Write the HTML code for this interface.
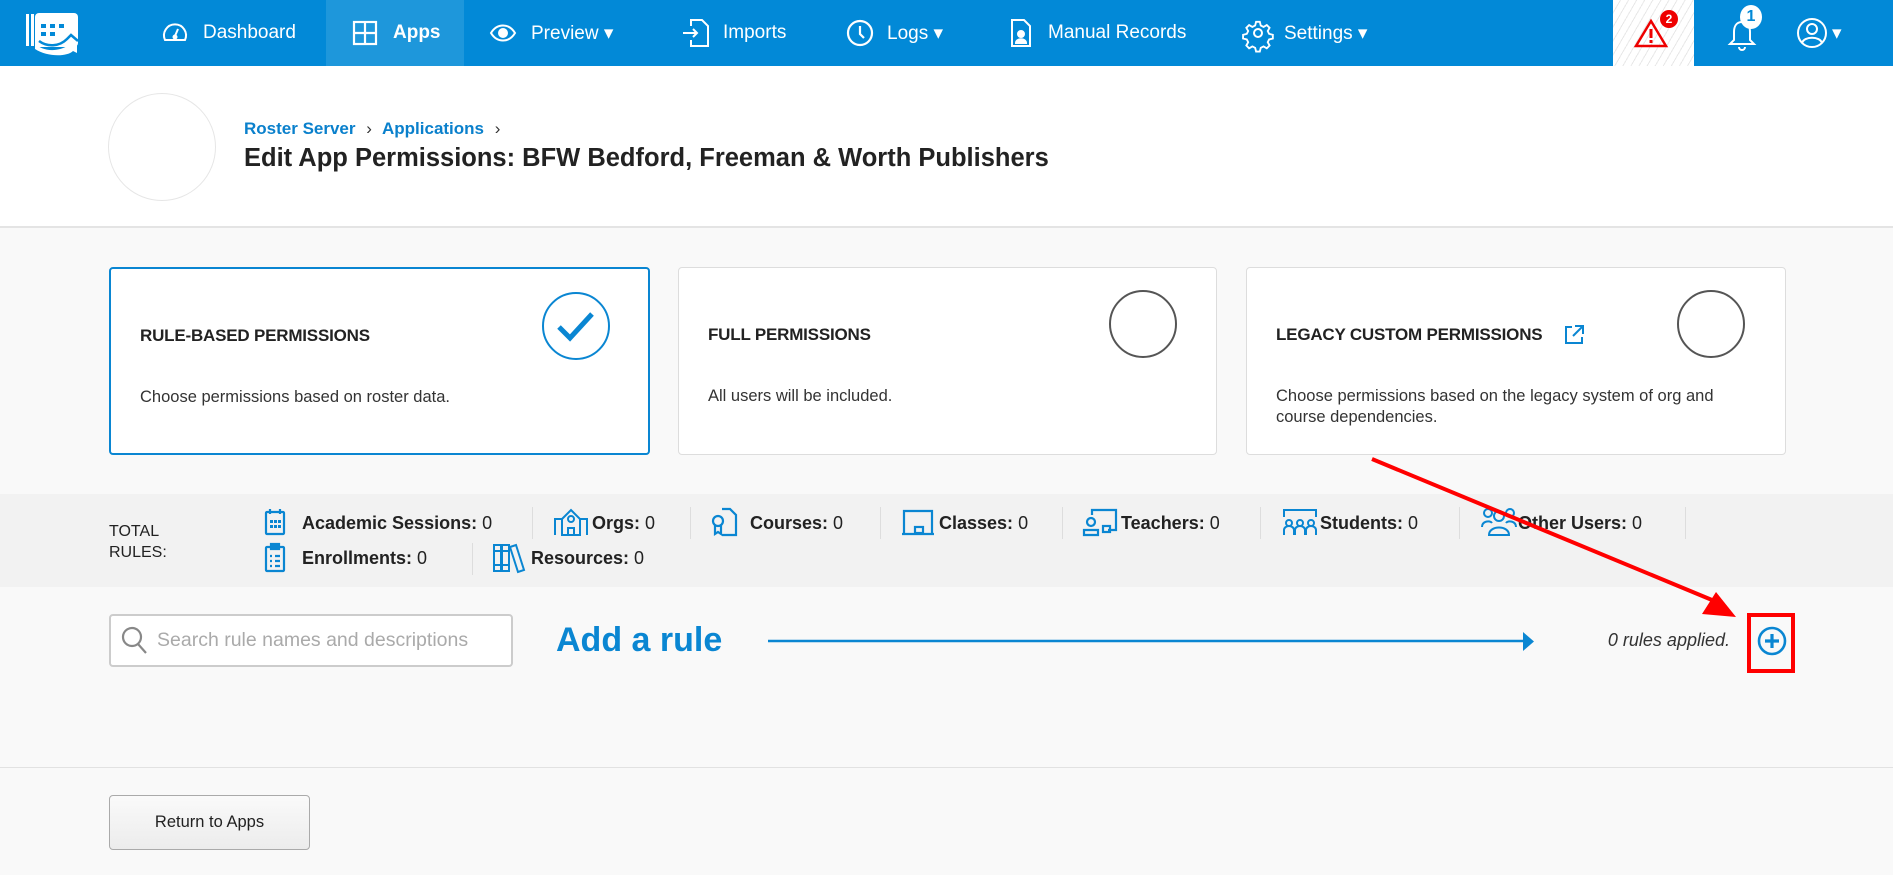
<!DOCTYPE html>
<html><head><meta charset="utf-8">
<style>
*{box-sizing:border-box;margin:0;padding:0}
body{width:1893px;height:875px;overflow:hidden;background:#f9f9f9;font-family:"Liberation Sans",sans-serif;color:#333;position:relative}
.abs{position:absolute}
.nav{left:0;top:0;width:1893px;height:66px;background:#0289d7}
.navtxt{color:#fff;font-size:19px;top:22px}
.hdr{left:0;top:66px;width:1893px;height:162px;background:#fff;border-bottom:2px solid #e4e4e4}
.card{background:#fff;border:1px solid #ddd;border-radius:4px;top:267px;height:188px}
.ct{font-weight:bold;font-size:17px;color:#222;top:57px;left:29px;letter-spacing:-0.2px}
.cd{font-size:16.5px;color:#333;top:118px;left:29px;line-height:21px}
.ring{width:68px;height:68px;border-radius:50%;border:2px solid #555;top:22px}
.bar{left:0;top:494px;width:1893px;height:93px;background:#f2f2f2}
.it{font-size:18px;color:#222;}
.it b{font-weight:bold}
.dv{width:1px;height:32px;background:#ddd}
svg{overflow:visible}
</style></head><body>
<div class="abs nav"></div>
<div class="abs" style="left:326px;top:0;width:138px;height:66px;background:#1e97db"></div>
<!-- logo -->
<svg class="abs" style="left:26px;top:13px" width="54" height="42" viewBox="0 0 54 42">
<rect x="0" y="1" width="3" height="32" fill="#fff"/><rect x="5" y="1" width="3" height="32" fill="#fff"/>
<rect x="9" y="0" width="43" height="34" rx="4" fill="#fff"/>
<path d="M9 30 c6 8 22 10 34 2 l2 -6 l6 4 v10 l-4 -2 c-6 6 -26 6 -38 -2z" fill="#fff"/>
<g fill="#0289d7"><rect x="15" y="11" width="5" height="4"/><rect x="24" y="11" width="5" height="4"/><rect x="33" y="11" width="5" height="4"/><rect x="15" y="19" width="5" height="4"/><rect x="24" y="19" width="5" height="4"/></g>
<path d="M13 28 c8 6 20 6 28 -2 l4 -4 l7 6" fill="none" stroke="#0289d7" stroke-width="2.5"/>
</svg>
<!-- nav icons -->
<svg class="abs" style="left:162px;top:20px" width="26" height="26" viewBox="0 0 26 26" fill="none" stroke="#fff" stroke-width="2"><path d="M3 20 a11 11 0 1 1 20 0 z"/><path d="M13 16 l3 -7"/><circle cx="13" cy="17" r="1.5" fill="#fff"/></svg>
<div class="abs navtxt" style="left:203px">Dashboard</div>
<svg class="abs" style="left:352px;top:20px" width="26" height="26" viewBox="0 0 26 26" fill="none" stroke="#fff" stroke-width="2.2"><rect x="2" y="2" width="22" height="22"/><path d="M13 2v22M2 13h22"/></svg>
<div class="abs navtxt" style="left:393px;font-weight:bold">Apps</div>
<svg class="abs" style="left:490px;top:22px" width="26" height="22" viewBox="0 0 26 22" fill="none" stroke="#fff" stroke-width="2"><path d="M1 11 c6 -10 18 -10 24 0 c-6 10 -18 10 -24 0z"/><circle cx="13" cy="11" r="4" fill="#fff"/></svg>
<div class="abs navtxt" style="left:531px">Preview ▾</div>
<svg class="abs" style="left:682px;top:18px" width="28" height="30" viewBox="0 0 28 30" fill="none" stroke="#fff" stroke-width="2"><path d="M9 8 v-6 h11 l6 6 v20 h-17 v-6"/><path d="M1 15 h14 M11 11 l4 4 -4 4"/></svg>
<div class="abs navtxt" style="left:723px">Imports</div>
<svg class="abs" style="left:846px;top:19px" width="28" height="28" viewBox="0 0 28 28" fill="none" stroke="#fff" stroke-width="2.2"><circle cx="14" cy="14" r="12"/><path d="M14 7 v8 l4 4"/></svg>
<div class="abs navtxt" style="left:887px">Logs ▾</div>
<svg class="abs" style="left:1010px;top:18px" width="22" height="30" viewBox="0 0 22 30" fill="none" stroke="#fff" stroke-width="2"><path d="M2 2 h12 l6 6 v20 h-18z"/><circle cx="11" cy="16" r="3" fill="#fff"/><path d="M6 25 c0 -5 10 -5 10 0z" fill="#fff"/></svg>
<div class="abs navtxt" style="left:1048px">Manual Records</div>
<svg class="abs" style="left:1244px;top:19px" width="28" height="28" viewBox="0 0 28 28" fill="none" stroke="#fff" stroke-width="2"><circle cx="14" cy="14" r="4"/><path d="M12 2h4l1 4 3 1.5 3.5-2 3 3-2 3.5 1.5 3 4 1v4l-4 1-1.5 3 2 3.5-3 3-3.5-2-3 1.5-1 4h-4l-1-4-3-1.5-3.5 2-3-3 2-3.5-1.5-3-4-1v-4l4-1 1.5-3-2-3.5 3-3 3.5 2 3-1.5z" transform="scale(.93) translate(1 1)"/></svg>
<div class="abs navtxt" style="left:1284px">Settings ▾</div>
<div class="abs" style="left:1613px;top:0;width:81px;height:66px;background:repeating-linear-gradient(120deg,#fff 0 6px,#e8e8e8 6px 7px)"></div>
<svg class="abs" style="left:1634px;top:18px" width="34" height="30" viewBox="0 0 34 30"><path d="M17 3 L32 28 H2 Z" fill="none" stroke="#e00" stroke-width="2.5"/><rect x="15.5" y="11" width="3" height="9" fill="#e00"/><rect x="15.5" y="22" width="3" height="3" fill="#e00"/></svg>
<div class="abs" style="left:1660px;top:10px;width:18px;height:18px;border-radius:50%;background:#e00;color:#fff;font-size:12px;font-weight:bold;text-align:center;line-height:18px">2</div>
<svg class="abs" style="left:1727px;top:14px" width="30" height="38" viewBox="0 0 30 38" fill="none" stroke="#fff" stroke-width="2"><path d="M15 8 c-6 0 -8 5 -8 10 v8 l-4 4 h24 l-4 -4 v-8 c0 -5 -2 -10 -8 -10z"/><path d="M12 33 a3 3 0 0 0 6 0"/></svg>
<div class="abs" style="left:1740px;top:5px;width:22px;height:24px;border-radius:50%;background:#fff;color:#0289d7;font-size:16px;font-weight:bold;text-align:center;line-height:24px">1</div>
<svg class="abs" style="left:1796px;top:17px" width="32" height="32" viewBox="0 0 32 32" fill="none" stroke="#fff" stroke-width="2"><circle cx="16" cy="16" r="14"/><circle cx="16" cy="12" r="5"/><path d="M6 26 c2 -7 18 -7 20 0"/></svg>
<div class="abs" style="left:1832px;top:22px;color:#fff;font-size:19px">▾</div>

<div class="abs hdr"></div>
<div class="abs" style="left:108px;top:93px;width:108px;height:108px;border-radius:50%;border:1px solid #e6e6e6;background:#fff"></div>
<div class="abs" style="left:244px;top:119px;font-size:17px;color:#0a80cc;font-weight:bold">Roster Server <span style="color:#333;font-weight:normal;margin:0 6px">›</span> Applications <span style="color:#333;font-weight:normal;margin-left:6px">›</span></div>
<div class="abs" style="left:244px;top:144px;font-size:25.5px;color:#222;font-weight:bold">Edit App Permissions: BFW Bedford, Freeman &amp; Worth Publishers</div>

<div class="abs card" style="left:109px;width:541px;border:2px solid #0a86d2">
 <div class="abs ct">RULE-BASED PERMISSIONS</div>
 <div class="abs cd">Choose permissions based on roster data.</div>
 <svg class="abs" style="left:430px;top:22px" width="70" height="70" viewBox="0 0 70 70"><circle cx="35" cy="35" r="33" fill="none" stroke="#0a86d2" stroke-width="2"/><path d="M18 36 l11 11 l22 -24" fill="none" stroke="#0a86d2" stroke-width="5"/></svg>
</div>
<div class="abs card" style="left:678px;width:539px">
 <div class="abs ct">FULL PERMISSIONS</div>
 <div class="abs cd">All users will be included.</div>
 <div class="abs ring" style="left:430px"></div>
</div>
<div class="abs card" style="left:1246px;width:540px">
 <div class="abs ct">LEGACY CUSTOM PERMISSIONS</div>
 <svg class="abs" style="left:316px;top:56px" width="22" height="22" viewBox="0 0 22 22" fill="none" stroke="#0a86d2" stroke-width="2"><path d="M9 3 h-6 v16 h16 v-6"/><path d="M12 2 h8 v8 M20 2 l-10 10"/></svg>
 <div class="abs cd" style="width:475px">Choose permissions based on the legacy system of org and course dependencies.</div>
 <div class="abs ring" style="left:430px"></div>
</div>

<div class="abs bar"></div>
<div class="abs" style="left:109px;top:521px;font-size:16px;color:#222;line-height:21px">TOTAL<br>RULES:</div>
<!-- row1 -->
<svg class="abs" style="left:264px;top:508px" width="22" height="28" viewBox="0 0 22 28" fill="none" stroke="#0a86d2" stroke-width="2.2"><rect x="2" y="4" width="18" height="22" rx="1"/><path d="M6 1v5M16 1v5"/><g fill="#0a86d2" stroke="none"><rect x="6" y="12" width="3" height="3"/><rect x="10" y="12" width="3" height="3"/><rect x="14" y="12" width="3" height="3"/><rect x="6" y="17" width="3" height="3"/><rect x="10" y="17" width="3" height="3"/><rect x="14" y="17" width="3" height="3"/></g></svg>
<div class="abs it" style="left:302px;top:513px"><b>Academic Sessions:</b> 0</div>
<div class="abs dv" style="left:532px;top:507px"></div>
<svg class="abs" style="left:553px;top:508px" width="36" height="28" viewBox="0 0 36 28" fill="none" stroke="#0a86d2" stroke-width="2"><path d="M2 27 v-16 h7 v16 M27 27 v-16 h7 v16 M9 11 l9 -9 9 9 v16 h-18z"/><circle cx="18" cy="11" r="3"/><path d="M15 27 v-7 h6 v7"/></svg>
<div class="abs it" style="left:592px;top:513px"><b>Orgs:</b> 0</div>
<div class="abs dv" style="left:690px;top:507px"></div>
<svg class="abs" style="left:710px;top:507px" width="28" height="30" viewBox="0 0 28 30" fill="none" stroke="#0a86d2" stroke-width="2.2"><path d="M12 2 h8 l6 6 v20 h-14"/><circle cx="8" cy="14" r="5"/><path d="M5 18 v9 l3 -2 3 2 v-9"/></svg>
<div class="abs it" style="left:750px;top:513px"><b>Courses:</b> 0</div>
<div class="abs dv" style="left:880px;top:507px"></div>
<svg class="abs" style="left:901px;top:508px" width="34" height="28" viewBox="0 0 34 28" fill="none" stroke="#0a86d2" stroke-width="2.2"><path d="M3 25 v-22 h28 v22 M1 26 h32"/><rect x="14" y="19" width="8" height="6"/></svg>
<div class="abs it" style="left:939px;top:513px"><b>Classes:</b> 0</div>
<div class="abs dv" style="left:1062px;top:507px"></div>
<svg class="abs" style="left:1083px;top:508px" width="36" height="28" viewBox="0 0 36 28" fill="none" stroke="#0a86d2" stroke-width="2.2"><path d="M9 7 v-5 h24 v20 h-8"/><circle cx="8" cy="14" r="4"/><path d="M1 27 v-5 h14 v5z"/><rect x="20" y="18" width="7" height="6"/></svg>
<div class="abs it" style="left:1121px;top:513px"><b>Teachers:</b> 0</div>
<div class="abs dv" style="left:1260px;top:507px"></div>
<svg class="abs" style="left:1282px;top:508px" width="36" height="28" viewBox="0 0 36 28" fill="none" stroke="#0a86d2" stroke-width="2"><path d="M2 9 v-7 h32 v7"/><circle cx="7" cy="15" r="3"/><circle cx="18" cy="15" r="3"/><circle cx="29" cy="15" r="3"/><path d="M2 27 v-5 a5 4 0 0 1 10 0 v5 M13 27 v-5 a5 4 0 0 1 10 0 v5 M24 27 v-5 a5 4 0 0 1 10 0 v5"/></svg>
<div class="abs it" style="left:1320px;top:513px"><b>Students:</b> 0</div>
<div class="abs dv" style="left:1459px;top:507px"></div>
<svg class="abs" style="left:1481px;top:507px" width="36" height="30" viewBox="0 0 36 30" fill="none" stroke="#0a86d2" stroke-width="2"><circle cx="7" cy="6" r="4"/><circle cx="18" cy="9" r="5"/><circle cx="29" cy="6" r="4"/><path d="M1 20 c0 -6 8 -7 10 -4 M35 20 c0 -6 -8 -7 -10 -4 M8 28 c0 -10 20 -10 20 0z"/></svg>
<div class="abs it" style="left:1518px;top:513px"><b>Other Users:</b> 0</div>
<div class="abs dv" style="left:1685px;top:507px"></div>
<!-- row2 -->
<svg class="abs" style="left:264px;top:543px" width="22" height="30" viewBox="0 0 22 30" fill="none" stroke="#0a86d2" stroke-width="2.2"><rect x="2" y="4" width="18" height="24" rx="1"/><rect x="7" y="1" width="8" height="5" fill="#0a86d2"/><path d="M6 13h2M11 13h5M6 18h2M11 18h5M6 23h2M11 23h5"/></svg>
<div class="abs it" style="left:302px;top:548px"><b>Enrollments:</b> 0</div>
<div class="abs dv" style="left:472px;top:543px"></div>
<svg class="abs" style="left:492px;top:543px" width="34" height="30" viewBox="0 0 34 30" fill="none" stroke="#0a86d2" stroke-width="2"><rect x="2" y="2" width="7" height="26"/><rect x="10" y="2" width="7" height="26"/><path d="M18 4 l6 -2 8 25 -6 2z"/><path d="M2 8h15M2 22h15"/></svg>
<div class="abs it" style="left:531px;top:548px"><b>Resources:</b> 0</div>

<div class="abs" style="left:109px;top:614px;width:404px;height:53px;border:2px solid #ccc;border-radius:4px;background:#fff"></div>
<svg class="abs" style="left:121px;top:626px" width="28" height="30" viewBox="0 0 28 30" fill="none" stroke="#888" stroke-width="2.2"><circle cx="11" cy="11" r="9"/><path d="M17 18 l8 9"/></svg>
<div class="abs" style="left:157px;top:629px;font-size:19.5px;color:#aaa">Search rule names and descriptions</div>
<div class="abs" style="left:556px;top:621px;font-size:34px;font-weight:bold;color:#0a86d2">Add a rule</div>
<svg class="abs" style="left:768px;top:630px" width="770" height="24" viewBox="0 0 770 24"><path d="M0 11 h757" stroke="#0a86d2" stroke-width="2.5"/><path d="M755 2 l11 9.5 -11 9.5z" fill="#0a86d2"/></svg>
<div class="abs" style="left:1530px;top:630px;width:200px;text-align:right;font-size:18px;font-style:italic;color:#333">0 rules applied.</div>
<div class="abs" style="left:1747px;top:613px;width:48px;height:60px;border:4px solid #f00"></div>
<svg class="abs" style="left:1756px;top:625px" width="32" height="32" viewBox="0 0 32 32" fill="none" stroke="#0a86d2"><circle cx="16" cy="16" r="13" stroke-width="2.6"/><path d="M16 9v14M9 16h14" stroke-width="3.2"/></svg>
<svg class="abs" style="left:0;top:0" width="1893" height="875" viewBox="0 0 1893 875"><path d="M1372 459 L1712 600" stroke="#f00" stroke-width="4"/><path d="M1736 617 L1702 614 L1716 592z" fill="#f00"/></svg>

<div class="abs" style="left:0;top:767px;width:1893px;height:1px;background:#e2e2e2"></div>
<div class="abs" style="left:109px;top:795px;width:201px;height:55px;border:1px solid #aaa;border-radius:4px;background:linear-gradient(#fafafa,#ececec);font-size:16.5px;color:#222;text-align:center;line-height:53px">Return to Apps</div>
</body></html>
